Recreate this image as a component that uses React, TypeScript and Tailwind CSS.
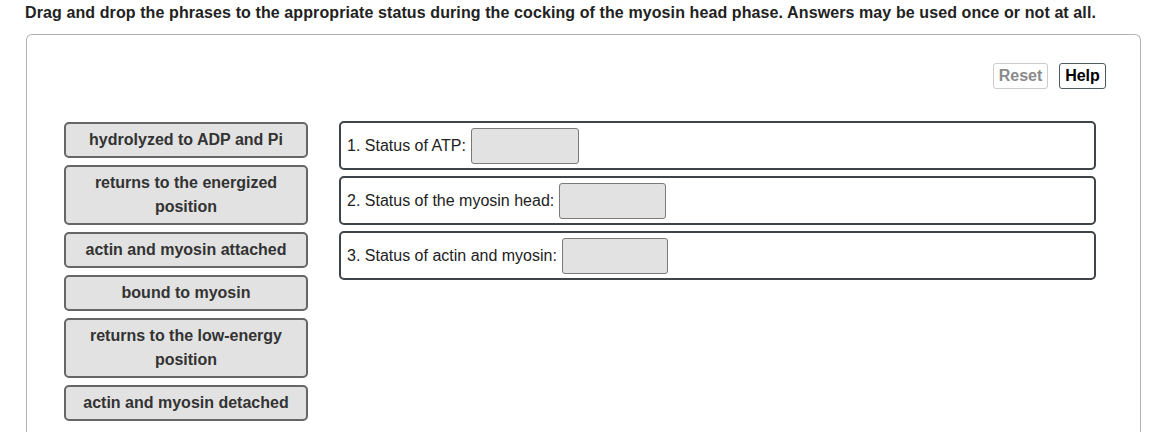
import React from "react";

const phrases: string[] = [
  "hydrolyzed to ADP and Pi",
  "returns to the energized position",
  "actin and myosin attached",
  "bound to myosin",
  "returns to the low-energy position",
  "actin and myosin detached",
];

const targets: { label: string; box: string }[] = [
  { label: "1. Status of ATP:", box: "w-[108px]" },
  { label: "2. Status of the myosin head:", box: "w-[107px]" },
  { label: "3. Status of actin and myosin:", box: "w-[106px]" },
];

const App: React.FC = () => {
  return (
    <div className="h-[432px] overflow-hidden bg-white font-['Liberation_Sans',Arial,sans-serif] text-[#333]">
      <h1 className="pl-[25px] pt-[4px] text-[16px] font-bold leading-[18px] tracking-[0.1px] text-[#222]">
        Drag and drop the phrases to the appropriate status during the cocking of the myosin head phase. Answers may be used once or not at all.
      </h1>

      <div className="ml-[26px] mt-[12px] w-[1115px] h-[398px] rounded-t-[6px] border border-b-0 border-[#b3b3b3]">
        <div className="flex justify-end gap-[11px] pt-[28px] pr-[34px]">
          <button className="h-[26px] w-[55px] rounded-[3px] border border-[#cccccc] text-[16px] font-bold text-[#8a8a8a]">
            Reset
          </button>
          <button className="h-[26px] w-[47px] rounded-[3px] border border-[#4c5c5c] text-[16px] font-bold text-black">
            Help
          </button>
        </div>

        <div className="mt-[32px] flex gap-[31px] pl-[37px]">
          <div className="flex w-[244px] flex-col gap-[7px] pt-[1px]">
            {phrases.map((p) => (
              <div
                key={p}
                className="flex min-h-[36px] items-center justify-center rounded-[5px] border-2 border-[#666] bg-[#e2e2e2] px-[8px] py-[4px] text-center text-[16px] font-bold leading-[24px] text-[#333]"
              >
                {p}
              </div>
            ))}
          </div>

          <div className="flex w-[757px] flex-col gap-[6px]">
            {targets.map((t) => (
              <div
                key={t.label}
                className="flex h-[49px] items-center gap-[5px] rounded-[5px] border-2 border-[#3e4447] pl-[6px] text-[16px] text-[#222]"
              >
                <span>{t.label}</span>
                <div className={`h-[36px] ${t.box} rounded-[3px] border border-[#7a7a7a] bg-[#e2e2e2]`} />
              </div>
            ))}
          </div>
        </div>
      </div>
    </div>
  );
};

export default App;
